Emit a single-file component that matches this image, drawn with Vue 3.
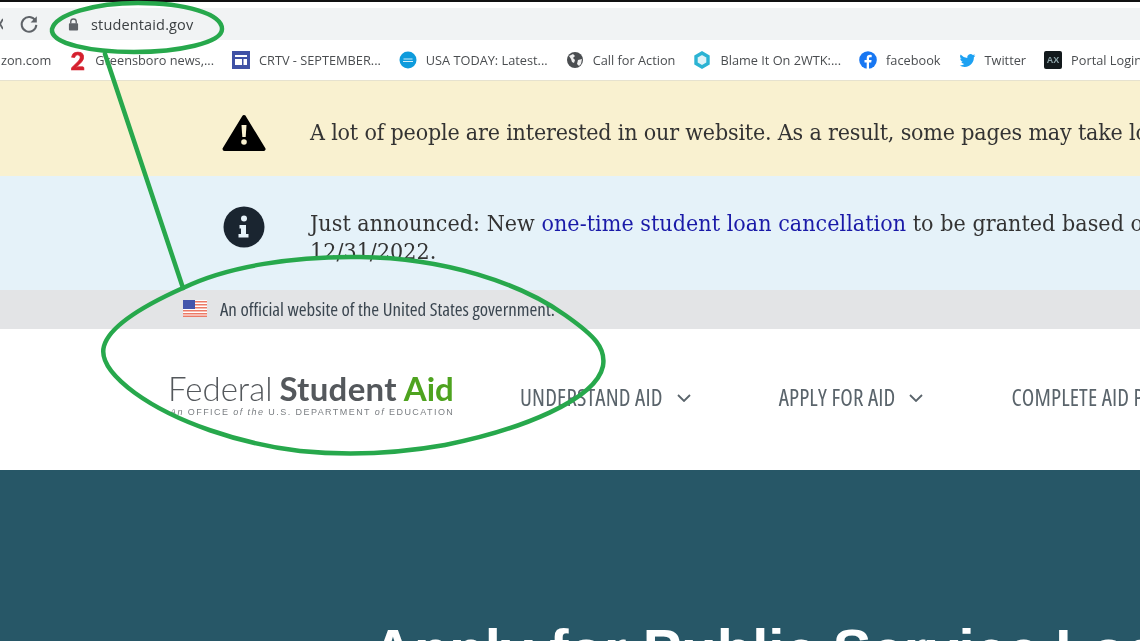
<script setup>
const bookmarks = [
  { label: 'Amazon.com', icon: 'none' },
  { label: 'Greensboro news,...', icon: 'two' },
  { label: 'CRTV - SEPTEMBER...', icon: 'crtv' },
  { label: 'USA TODAY: Latest...', icon: 'usa' },
  { label: 'Call for Action', icon: 'globe' },
  { label: 'Blame It On 2WTK:...', icon: 'hex' },
  { label: 'facebook', icon: 'fb' },
  { label: 'Twitter', icon: 'bird' },
  { label: 'Portal Login', icon: 'ax' }
]

const navItems = ['UNDERSTAND AID', 'APPLY FOR AID', 'COMPLETE AID PROCESS']
</script>

<template>
  <div class="page">
    <header class="browser">
      <div class="toolbar">
        <svg class="back" viewBox="0 0 3 12" width="3" height="12">
          <path d="M3 1L0 6l3 5" fill="none" stroke="#5f6368" stroke-width="1.800" />
        </svg>
        <svg class="reload" viewBox="0 0 24 24" width="22" height="22">
          <path d="M19 8.500A8 8 0 1 0 20 13" fill="none" stroke="#5f6368" stroke-width="2.200" />
          <path d="M20.500 3.500v6.800h-6.800z" fill="#5f6368" />
        </svg>
        <svg class="lock" viewBox="0 0 12 14" width="11" height="13">
          <path d="M3 6V4a3 3 0 0 1 6 0v2" fill="none" stroke="#5f6368" stroke-width="1.500" />
          <rect x="1" y="5.500" width="10" height="8" rx="1" fill="#5f6368" />
        </svg>
        <span class="url">studentaid.gov</span>
      </div>
      <nav class="bookmarks">
        <div v-for="b in bookmarks" :key="b.label" class="bookmark">
          <span v-if="b.icon === 'two'" class="two">2</span>
          <svg v-else-if="b.icon === 'crtv'" viewBox="0 0 18 18" width="18" height="18">
            <rect width="18" height="18" fill="#3f51a5" />
            <path d="M3 4h12v2H3zM3 8h7v6H3zM11.500 8H15v6h-3.500z" fill="#fff" />
          </svg>
          <svg v-else-if="b.icon === 'usa'" viewBox="0 0 18 18" width="18" height="18">
            <circle cx="9" cy="9" r="8.500" fill="#0e9bdc" />
            <path d="M4.500 8h9M4 10.500h10" stroke="#cfeefa" stroke-width="1.200" />
          </svg>
          <svg v-else-if="b.icon === 'globe'" viewBox="0 0 18 18" width="18" height="18">
            <circle cx="9" cy="9" r="8" fill="#4a4d50" />
            <path d="M3 5l4-2 2 2-2 2 2 2-1 3-2-1-1-3zM12 9l4-1-1 5-2 2-2-2z" fill="#eee" />
          </svg>
          <svg v-else-if="b.icon === 'hex'" viewBox="0 0 18 18" width="18" height="18">
            <path d="M9 2l6 3.500v7L9 16l-6-3.500v-7z" fill="#dff3f8" stroke="#2bb3d3" stroke-width="3.400" />
          </svg>
          <svg v-else-if="b.icon === 'fb'" viewBox="0 0 18 18" width="18" height="18">
            <circle cx="9" cy="9" r="8.800" fill="#1877f2" />
            <path d="M10 18v-6.500h2.200l.4-2.500H10V7.500c0-.8.400-1.300 1.400-1.300h1.300V4c-2.800-.5-5 .300-5 3.200V9H5.500v2.500h2.200V18z" fill="#fff" />
          </svg>
          <svg v-else-if="b.icon === 'bird'" viewBox="0 0 24 24" width="17" height="17">
            <path d="M23 5c-.8.400-1.700.600-2.600.700.900-.600 1.600-1.400 2-2.500-.9.500-1.800.900-2.900 1.100A4.600 4.600 0 0 0 11.700 8.500 13 13 0 0 1 2.300 3.700a4.600 4.600 0 0 0 1.400 6.100c-.7 0-1.400-.200-2-.600 0 2.200 1.600 4.100 3.700 4.600-.7.200-1.400.200-2.100.1.600 1.800 2.300 3.100 4.300 3.200A9.300 9.300 0 0 1 1 19c2 1.300 4.500 2 7 2 8.500 0 13.300-7.200 13-13.600.9-.6 1.600-1.400 2-2.400z" fill="#1da1f2" />
          </svg>
          <span v-else-if="b.icon === 'ax'" class="ax">AX</span>
          <span class="bookmark-label">{{ b.label }}</span>
        </div>
      </nav>
    </header>

    <section class="alert alert-warn">
      <svg class="alert-icon" viewBox="0 0 44 38" width="44" height="38">
        <path d="M22 3L41.500 35H2.500z" fill="#000" stroke="#000" stroke-width="4" stroke-linejoin="round" />
        <path d="M19.500 11h5l-.8 12h-3.400z" fill="#f9f1d0" />
        <circle cx="22" cy="28" r="2.800" fill="#f9f1d0" />
      </svg>
      <p>A lot of people are interested in our website. As a result, some pages may take longer to load than usual.</p>
    </section>

    <section class="alert alert-info">
      <svg class="alert-icon" viewBox="0 0 42 42" width="42" height="42">
        <circle cx="21" cy="21" r="20.500" fill="#1a2530" />
        <circle cx="21" cy="12.500" r="3" fill="#e5f2f9" />
        <path d="M16.500 19h6.500v9h2.500v3.500h-10V28H18v-5.500h-1.500z" fill="#e5f2f9" />
      </svg>
      <p>Just announced: New <a>one-time student loan cancellation</a> to be granted based on income, for loans taken out by<br />12/31/2022.</p>
    </section>

    <div class="gov">
      <svg viewBox="0 0 24 17" width="24" height="17">
        <rect width="24" height="17" fill="#fff" />
        <path d="M0 1h24v1.500H0zM0 4h24v1.500H0zM0 7h24v1.500H0zM0 10h24v1.500H0zM0 13h24v1.500H0zM0 15.500h24V17H0z" fill="#ec7a66" />
        <rect width="12" height="9" fill="#4356ac" />
      </svg>
      <span>An official website of the United States government.</span>
    </div>

    <div class="site-nav">
      <div class="logo">
        <div class="logo-main">
          <span class="federal">Federal</span>
          <span class="student">Student</span>
          <span class="aid">Aid</span>
        </div>
        <div class="logo-sub"><i>An</i> OFFICE <i>of the</i> U.S. DEPARTMENT <i>of</i> EDUCATION</div>
      </div>
      <ul class="menu">
        <li v-for="item in navItems" :key="item">
          <span>{{ item }}</span>
          <svg viewBox="0 0 14 8" width="14" height="8">
            <path d="M1 1l6 6 6-6" fill="none" stroke="#5a646b" stroke-width="1.800" />
          </svg>
        </li>
      </ul>
    </div>

    <section class="hero">
      <h1>Apply for Public Service Loan Forgiveness</h1>
    </section>

    <!-- hand drawn marker annotation on top of the screenshot -->
    <svg class="marker" viewBox="0 0 1140 641" width="1140" height="641">
      <g fill="none" stroke="#27a84c" stroke-width="4.500" stroke-linecap="round">
        <path d="M52 29C56 14 95 3 138 3C186 3 222 14 222 29C222 43 178 52 134 52C92 52 50 44 52 29Z" />
        <path d="M105 54L183 288" />
        <path d="M183 288C228 266 295 256 360 257C445 258 520 283 565 315C595 336 606 348 603 366C596 400 520 430 445 445C400 453 350 456 300 451C240 444 175 422 135 393C112 376 100 360 104 346C110 325 145 305 183 288Z" />
      </g>
    </svg>
  </div>
</template>

<style>
html,
body {
  overflow: hidden;
}
</style>

<style scoped>
.page {
  position: relative;
  width: 1140px;
  height: 641px;
  overflow: hidden;
  background: #fff;
  display: flex;
  flex-direction: column;
  filter: blur(0.35px);
}

.browser {
  border-top: 2px solid #111;
  flex: none;
}

.toolbar {
  height: 32px;
  margin-top: 6px;
  display: flex;
  align-items: center;
  background: #f1f3f4;
}

.back {
  margin-right: 15px;
}

.lock {
  margin-left: 28px;
}

.url {
  margin-left: 12px;
  font: 14.500px "Open Sans", sans-serif;
  letter-spacing: 0.150px;
  color: #3c4043;
}

.bookmarks {
  height: 41px;
  border-bottom: 1px solid #e6e2cf;
  box-sizing: border-box;
  display: flex;
  align-items: center;
  gap: 18px;
  margin-left: -26px;
  white-space: nowrap;
  font: 12.750px "Open Sans", sans-serif;
  color: #4a4d50;
}

.bookmark {
  display: flex;
  align-items: center;
  gap: 9px;
  flex: none;
}

.two {
  font: 900 25px/18px Lato, sans-serif;
  -webkit-text-stroke: 0.600px #d5202e;
  color: #d5202e;
  width: 17px;
  text-align: center;
}

.ax {
  width: 18px;
  height: 18px;
  background: #12191c;
  color: #8fa6ab;
  border-radius: 2px;
  font: bold 9px/18px "Liberation Sans", sans-serif;
  text-align: center;
}

.alert {
  display: flex;
  flex: none;
  white-space: nowrap;
  font: 23px/28px "DejaVu Serif", serif;
  font-stretch: condensed;
  letter-spacing: 0.050px;
  color: #333;
  box-sizing: border-box;
  overflow: hidden;
}

.alert-icon {
  flex: none;
}

.alert p {
  margin: 0;
  flex: none;
}

.alert-warn {
  height: 95px;
  background: #f9f1d0;
  align-items: center;
  padding: 8px 0 0 222px;
  gap: 44px;
}

.alert-warn p {
  padding-bottom: 2px;
  letter-spacing: -0.180px;
}

.alert-info {
  height: 114px;
  background: #e5f2f9;
  padding: 30px 0 0 223px;
  gap: 45px;
}

.alert-info p {
  padding-top: 3px;
}

.alert-info a {
  color: #1a1aa8;
}

.gov {
  height: 39px;
  flex: none;
  background: #e3e4e6;
  display: flex;
  align-items: center;
  gap: 13px;
  padding: 0 0 2px 183px;
  box-sizing: border-box;
  font: 18.900px "Open Sans", sans-serif;
  font-stretch: 75%;
  color: #3b4650;
}

.site-nav {
  height: 141px;
  flex: none;
  display: flex;
  padding-left: 170px;
  white-space: nowrap;
}

.logo {
  padding-top: 42px;
  width: 283px;
  flex: none;
}

.logo-main {
  display: flex;
  margin-left: -2px;
  font: 33px/34px Lato, sans-serif;
  gap: 7px;
}

.federal {
  font-weight: 300;
  color: #54585c;
}

.student {
  font-weight: 700;
  letter-spacing: 0.300px;
  color: #54585c;
}

.aid {
  font-weight: 700;
  color: #4ea31f;
}

.logo-sub {
  font: 9px/10px "Liberation Sans", sans-serif;
  letter-spacing: 1.430px;
  color: #7a7e82;
  margin-top: 2px;
}

.menu {
  list-style: none;
  margin: 54px 0 0;
  padding: 0 0 0 67px;
  height: 29px;
  display: flex;
  gap: 88px;
  font: 23px/29px "Open Sans", sans-serif;
  font-stretch: 75%;
  letter-spacing: 0.150px;
  color: #5a646b;
}

.menu li {
  display: flex;
  align-items: center;
  gap: 14px;
}

.hero {
  flex: 1;
  background: #275767;
  padding: 147px 0 0 372px;
  overflow: hidden;
  white-space: nowrap;
}

.hero h1 {
  margin: 0;
  font: bold 58px/66px "Liberation Sans", sans-serif;
  color: #fff;
}

.marker {
  position: absolute;
  left: 0;
  top: 0;
  pointer-events: none;
}
</style>
